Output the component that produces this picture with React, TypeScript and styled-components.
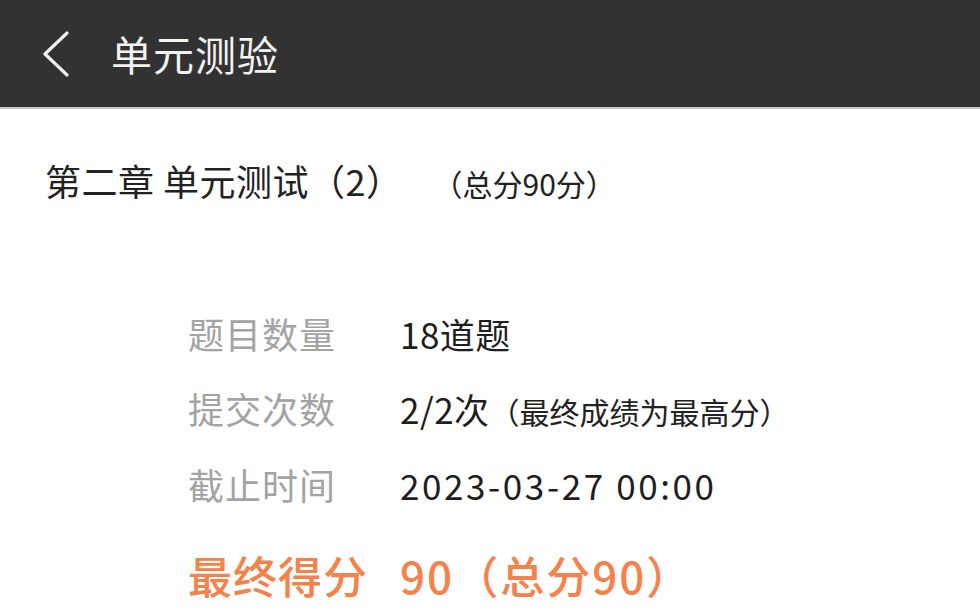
import styled, { createGlobalStyle } from "styled-components";

const GlobalStyle = createGlobalStyle`
    html, body {
        margin: 0;
        padding: 0;
        background: #ffffff;
    }
    body {
        font-family: "Noto Sans CJK SC", "Noto Sans", sans-serif;
    }
`;

const Page = styled.div`
    width: 980px;
    height: 612px;
    overflow: hidden;
    background: #ffffff;
    display: flex;
    flex-direction: column;
`;

const Header = styled.header`
    height: 107px;
    background-color: #323232;
    border-bottom: 2px solid #c8c8c8;
    display: flex;
    align-items: center;
    padding-left: 42px;
    gap: 41px;
    flex-shrink: 0;
`;

const BackBtn = styled.button`
    padding: 0;
    margin: 0;
    border: none;
    background: none;
    display: flex;
    align-items: center;
    cursor: pointer;
`;

const HeaderTitle = styled.h1`
    margin: 0 0 2px 0;
    color: #f2f2f2;
    font-size: 41px;
    font-weight: 400;
    letter-spacing: 1px;
`;

const Content = styled.main`
    display: flex;
    flex-direction: column;
    padding: 45px 0 0 45px;
`;

const Title = styled.div`
    display: flex;
    align-items: baseline;
    color: #222222;
    font-size: 36px;
    letter-spacing: 0.5px;
    height: 74px;
`;

const Small = styled.span`
    font-size: 30px;
    letter-spacing: 0;
    color: #222222;
`;

const TitleNote = styled(Small)`
    margin-left: 30px;
`;

const Info = styled.div`
    display: grid;
    grid-template-columns: 212px auto;
    grid-template-rows: 74px 76px 76px 106px;
    align-items: center;
    margin: 68px 0 0 143px;
`;

const Label = styled.div<{ $accent?: boolean }>`
    color: ${(p) => (p.$accent ? "#f5824a" : "#a3a3a3")};
    font-size: ${(p) => (p.$accent ? "44px" : "36px")};
    font-weight: ${(p) => (p.$accent ? 500 : 400)};
    letter-spacing: ${(p) => (p.$accent ? "1px" : "1px")};
`;

const Value = styled.div<{ $accent?: boolean; $spacing?: number }>`
    color: ${(p) => (p.$accent ? "#f5824a" : "#1e1e1e")};
    font-size: ${(p) => (p.$accent ? "44px" : "35px")};
    font-weight: ${(p) => (p.$accent ? 500 : 400)};
    letter-spacing: ${(p) => p.$spacing ?? 0}px;
    display: flex;
    align-items: baseline;
`;

export default function App() {
    return (
        <Page>
            <GlobalStyle />
            <Header>
                <BackBtn aria-label="返回">
                    <svg width="28" height="46" viewBox="0 0 28 46">
                        <path d="M25 2 L3 23 L25 44" fill="none" stroke="#f0f0f0" strokeWidth="3.2" strokeLinecap="round" strokeLinejoin="round" />
                    </svg>
                </BackBtn>
                <HeaderTitle>单元测验</HeaderTitle>
            </Header>
            <Content>
                <Title>
                    第二章 单元测试（2）
                    <TitleNote>（总分90分）</TitleNote>
                </Title>
                <Info>
                    <Label>题目数量</Label>
                    <Value $spacing={0.5}>18道题</Value>
                    <Label>提交次数</Label>
                    <Value $spacing={0.5}>
                        2/2次<Small>（最终成绩为最高分）</Small>
                    </Value>
                    <Label>截止时间</Label>
                    <Value $spacing={2.6}>2023-03-27 00:00</Value>
                    <Label $accent>最终得分</Label>
                    <Value $accent $spacing={2}>90（总分90）</Value>
                </Info>
            </Content>
        </Page>
    );
}
